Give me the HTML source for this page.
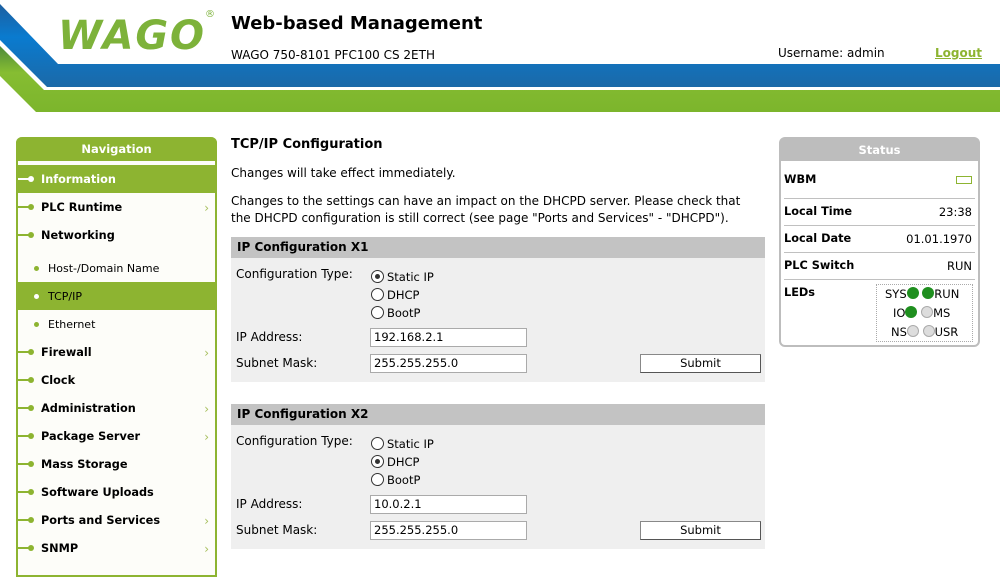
<!DOCTYPE html>
<html><head><meta charset="utf-8"><style>
*{margin:0;padding:0;box-sizing:border-box}
body{width:1000px;height:562px;overflow:hidden;background:#fff;font-family:"DejaVu Sans",sans-serif;font-size:12px;color:#000;position:relative}
.abs{position:absolute}
.nav{left:16px;top:137px;width:201px;height:440px;border:2px solid #8db431;border-top:none;border-radius:6px 6px 0 0;background:#fdfdf9}
.navh{left:16px;top:137px;width:201px;height:24px;background:#8db431;border-radius:6px 6px 0 0;color:#fff;font:bold 11.5px "DejaVu Sans",sans-serif;text-align:center;line-height:24px}
.it{position:absolute;left:18px;width:197px;height:28px;font:bold 11.3px "DejaVu Sans",sans-serif;line-height:29px;padding-left:23px}
.it .ln{position:absolute;left:0;top:13px;width:12px;height:2px;background:#8db431}
.it .dt{position:absolute;left:10px;top:11px;width:6px;height:6px;border-radius:3px;background:#8db431}
.it.sel{background:#8db431;color:#fff}
.it.sel .ln,.it.sel .dt{background:#fff}
.it .ar{position:absolute;right:6px;top:1px;color:#a8c060;font-weight:normal;font-size:12px}
.sub{position:absolute;left:18px;width:197px;height:28px;font:11px "DejaVu Sans",sans-serif;line-height:29px;padding-left:30px}
.sub .dt{position:absolute;left:16px;top:12px;width:5px;height:5px;border-radius:3px;background:#8db431}
.sub.sel{background:#8db431}
.sub.sel .dt{background:#fff}
.sec{left:231px;width:534px;background:#efefef}
.sech{height:21px;background:#c3c3c3;font-weight:bold;font-size:12px;line-height:21px;padding-left:6px}
.lbl{position:absolute;left:5px;font-size:12px}
.rad{position:absolute;left:140px;font-size:11.5px}
.rad span{display:inline-block;width:13px;height:13px;border:1px solid #333;border-radius:7px;vertical-align:-2px;margin-right:3px;background:#fff;position:relative}
.rad span.on::after{content:"";position:absolute;left:3px;top:3px;width:5px;height:5px;border-radius:3px;background:#333}
.inp{position:absolute;left:139px;width:157px;height:19px;border:1px solid #aaa;background:#fff;font-size:11.5px;padding-left:3px;line-height:17px}
.btn{position:absolute;left:409px;width:121px;height:19px;border:1px solid #888;border-right-color:#555;border-bottom-color:#555;background:#fff;font-size:11.5px;text-align:center;line-height:17px}
.st{left:779px;top:137px;width:201px;height:210px;border:2px solid #bdbdbd;border-radius:6px;background:#fff}
.sth{height:22px;background:#bdbdbd;color:#fff;font:bold 11.5px "DejaVu Sans",sans-serif;text-align:center;line-height:22px}
.row{position:absolute;left:3px;width:191px;border-bottom:1px solid #c0c0c0;font:bold 11.3px "DejaVu Sans",sans-serif}
.row b{position:absolute;right:3px;font:11.5px "DejaVu Sans",sans-serif}
.led{display:inline-block;width:12px;height:12px;border-radius:6px;vertical-align:-1px}
.g{background:#1f8f1f}.o{background:#ddd;border:1px solid #aaa}
</style></head><body>
<svg class="abs" style="left:0;top:0" width="1000" height="115">
<defs><linearGradient id="b" x1="0" y1="0" x2="0" y2="1"><stop offset="0" stop-color="#1d5fa0"/><stop offset=".4" stop-color="#0a7bcf"/><stop offset="1" stop-color="#1b69a8"/></linearGradient>
<linearGradient id="gr" x1="0" y1="0" x2="0" y2="1"><stop offset="0" stop-color="#4f8a3a"/><stop offset=".4" stop-color="#86bd32"/><stop offset="1" stop-color="#7cb52c"/></linearGradient></defs>
<polygon points="0,4 58,64 1000,64 1000,87 47,87 0,40" fill="url(#b)"/>
<polygon points="0,46 44,90 1000,90 1000,112 36,112 0,76" fill="url(#gr)"/>
<text x="58" y="49" font-family="DejaVu Sans" font-weight="bold" font-style="italic" font-size="40" fill="#7db23a" letter-spacing="-1" textLength="145">WAGO</text>
<text x="205" y="17" font-family="DejaVu Sans" font-size="10" fill="#7db23a">®</text>
</svg>
<div class="abs" style="left:231px;top:13px;font:bold 18px 'DejaVu Sans',sans-serif">Web-based Management</div>
<div class="abs" style="left:231px;top:48px;font-size:12px">WAGO 750-8101 PFC100 CS 2ETH</div>
<div class="abs" style="left:778px;top:46px;font-size:12px">Username: admin</div>
<div class="abs" style="left:935px;top:46px;font:bold 12px 'DejaVu Sans',sans-serif;color:#8db431;text-decoration:underline">Logout</div>

<div class="abs nav"></div>
<div class="abs navh">Navigation</div>
<div class="it sel" style="top:165px"><i class="ln"></i><i class="dt"></i>Information</div>
<div class="it" style="top:193px"><i class="ln"></i><i class="dt"></i>PLC Runtime<span class="ar">›</span></div>
<div class="it" style="top:221px"><i class="ln"></i><i class="dt"></i>Networking</div>
<div class="sub" style="top:254px"><i class="dt"></i>Host-/Domain Name</div>
<div class="sub sel" style="top:282px"><i class="dt"></i>TCP/IP</div>
<div class="sub" style="top:310px"><i class="dt"></i>Ethernet</div>
<div class="it" style="top:338px"><i class="ln"></i><i class="dt"></i>Firewall<span class="ar">›</span></div>
<div class="it" style="top:366px"><i class="ln"></i><i class="dt"></i>Clock</div>
<div class="it" style="top:394px"><i class="ln"></i><i class="dt"></i>Administration<span class="ar">›</span></div>
<div class="it" style="top:422px"><i class="ln"></i><i class="dt"></i>Package Server<span class="ar">›</span></div>
<div class="it" style="top:450px"><i class="ln"></i><i class="dt"></i>Mass Storage</div>
<div class="it" style="top:478px"><i class="ln"></i><i class="dt"></i>Software Uploads</div>
<div class="it" style="top:506px"><i class="ln"></i><i class="dt"></i>Ports and Services<span class="ar">›</span></div>
<div class="it" style="top:534px"><i class="ln"></i><i class="dt"></i>SNMP<span class="ar">›</span></div>

<div class="abs" style="left:231px;top:137px;font-weight:bold;font-size:13px">TCP/IP Configuration</div>
<div class="abs" style="left:231px;top:166px">Changes will take effect immediately.</div>
<div class="abs" style="left:231px;top:193px;width:525px;line-height:17px">Changes to the settings can have an impact on the DHCPD server. Please check that the DHCPD configuration is still correct (see page "Ports and Services" - "DHCPD").</div>

<div class="abs sec" style="top:237px;height:145px">
<div class="sech">IP Configuration X1</div>
<div class="lbl" style="top:30px">Configuration Type:</div>
<div class="rad" style="top:33px"><span class="on"></span>Static IP</div>
<div class="rad" style="top:51px"><span></span>DHCP</div>
<div class="rad" style="top:69px"><span></span>BootP</div>
<div class="lbl" style="top:93px">IP Address:</div>
<div class="inp" style="top:91px">192.168.2.1</div>
<div class="lbl" style="top:119px">Subnet Mask:</div>
<div class="inp" style="top:117px">255.255.255.0</div>
<div class="btn" style="top:117px">Submit</div>
</div>
<div class="abs sec" style="top:404px;height:145px">
<div class="sech">IP Configuration X2</div>
<div class="lbl" style="top:30px">Configuration Type:</div>
<div class="rad" style="top:33px"><span></span>Static IP</div>
<div class="rad" style="top:51px"><span class="on"></span>DHCP</div>
<div class="rad" style="top:69px"><span></span>BootP</div>
<div class="lbl" style="top:93px">IP Address:</div>
<div class="inp" style="top:91px">10.0.2.1</div>
<div class="lbl" style="top:119px">Subnet Mask:</div>
<div class="inp" style="top:117px">255.255.255.0</div>
<div class="btn" style="top:117px">Submit</div>
</div>

<div class="abs st">
<div class="sth">Status</div>
<div class="row" style="top:22px;height:38px;padding-top:12px">WBM<i style="position:absolute;right:3px;top:15px;width:16px;height:8px;border:1px solid #8db431"></i></div>
<div class="row" style="top:60px;height:27px;padding-top:6px">Local Time<b style="top:6px">23:38</b></div>
<div class="row" style="top:87px;height:27px;padding-top:6px">Local Date<b style="top:6px">01.01.1970</b></div>
<div class="row" style="top:114px;height:27px;padding-top:6px">PLC Switch<b style="top:6px">RUN</b></div>
<div class="row" style="top:141px;height:64px;padding-top:6px;border:none">LEDs
<div style="position:absolute;left:92px;top:4px;width:97px;height:58px;border:1px dotted #aaa;font:11.5px 'DejaVu Sans',sans-serif;line-height:19px;font-weight:normal">
<div style="position:absolute;left:8px;top:0">SYS<span class="led g"></span> <span class="led g"></span>RUN</div>
<div style="position:absolute;left:16px;top:19px">IO<span class="led g"></span> <span class="led o"></span>MS</div>
<div style="position:absolute;left:14px;top:38px">NS<span class="led o"></span> <span class="led o"></span>USR</div>
</div></div>
</div>
</body></html>
